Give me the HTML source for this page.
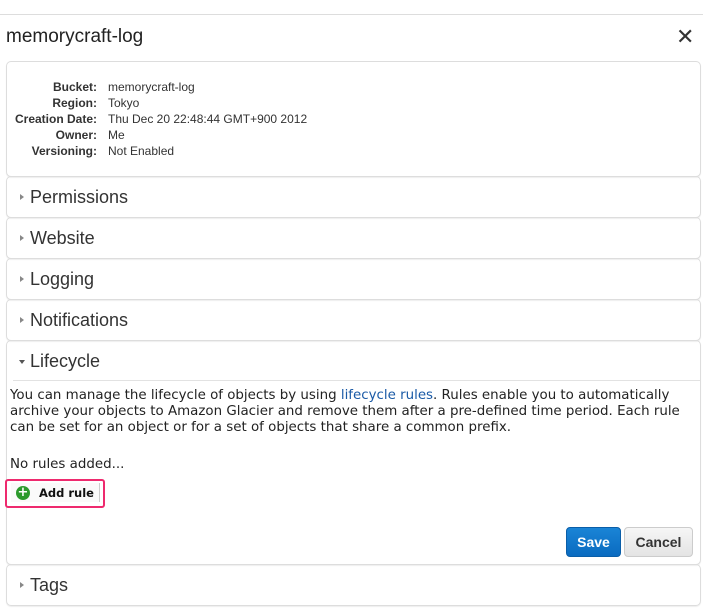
<!DOCTYPE html>
<html><head><style>
body{margin:0;width:703px;height:616px;background:#fff;font-family:"Liberation Sans",Arial,sans-serif;color:#333;position:relative;overflow:hidden}
.topline{position:absolute;top:14px;left:0;width:703px;height:1px;background:#ddd}
.title{position:absolute;top:26px;left:6px;font-size:19px;color:#222}
.close{position:absolute;top:24px;left:676px;font-size:22px;color:#333}
.box{position:absolute;left:6px;width:693px;border:1px solid #ddd;border-radius:5px;box-shadow:0 1px 1px #eee}
.info{top:61px;height:114px}
.row{position:absolute;font-size:12px;left:0;width:400px}
.row b{position:absolute;right:310px;width:120px;text-align:right;color:#333}
.row span{position:absolute;left:101px}
.sec{height:40px}
.sec .h{position:absolute;left:23px;top:10px;font-size:18px;color:#333}
.tri{position:absolute;left:13px;top:17px;width:0;height:0;border-left:4px solid #888;border-top:3px solid transparent;border-bottom:3px solid transparent}
.tridown{position:absolute;left:12px;top:19px;width:0;height:0;border-top:4px solid #555;border-left:3px solid transparent;border-right:3px solid transparent}
.desc{position:absolute;left:10px;top:388px;font-family:"DejaVu Sans",Verdana,sans-serif;font-size:13.4px;line-height:16px;color:#222;width:670px}
.desc a{color:#1a5aa6;text-decoration:none}
.norules{position:absolute;left:10px;top:457px;font-family:"DejaVu Sans",Verdana,sans-serif;font-size:13.4px;color:#222}
.addrule{position:absolute;left:5px;top:479px;width:96px;height:25px;border:2px solid #ee2a6e;border-radius:3px}
.addrule .in{position:absolute;left:4px;top:2px;width:88px;height:19px;border-right:1px solid #ccc;background:#fafafa;font-family:"DejaVu Sans",Verdana,sans-serif;font-weight:bold;font-size:11.5px;color:#111}
.plus{position:absolute;left:5px;top:3px;width:14px;height:14px;border-radius:50%;background:#2c9a2c;color:#fff;font-size:13px;line-height:13px;text-align:center}
.save{position:absolute;left:566px;top:527px;width:53px;height:28px;border-radius:4px;background:linear-gradient(#1a84d6,#0a6bc0);border:1px solid #0a5ea8;color:#fff;font-weight:bold;font-size:14px;text-align:center;line-height:28px}
.cancel{position:absolute;left:624px;top:527px;width:67px;height:28px;border-radius:4px;background:linear-gradient(#f6f6f6,#e4e4e4);border:1px solid #ccc;color:#333;font-weight:bold;font-size:14px;text-align:center;line-height:28px}
</style></head><body>
<div class="topline"></div>
<div class="title">memorycraft-log</div>
<div class="close">✕</div>
<div class="box info">
<div class="row" style="top:18px"><b>Bucket:</b><span>memorycraft-log</span></div>
<div class="row" style="top:34px"><b>Region:</b><span>Tokyo</span></div>
<div class="row" style="top:50px"><b>Creation Date:</b><span>Thu Dec 20 22:48:44 GMT+900 2012</span></div>
<div class="row" style="top:66px"><b>Owner:</b><span>Me</span></div>
<div class="row" style="top:82px"><b>Versioning:</b><span>Not Enabled</span></div>
</div>
<div class="box sec" style="top:176px"><div class="tri"></div><div class="h">Permissions</div></div>
<div class="box sec" style="top:217px"><div class="tri"></div><div class="h">Website</div></div>
<div class="box sec" style="top:258px"><div class="tri"></div><div class="h">Logging</div></div>
<div class="box sec" style="top:299px"><div class="tri"></div><div class="h">Notifications</div></div>
<div class="box" style="top:340px;height:223px"><div class="tridown"></div><div class="h" style="position:absolute;left:23px;top:10px;font-size:18px">Lifecycle</div>
<div style="position:absolute;left:6px;right:0;top:39px;height:1px;background:#e2e2e2"></div></div>
<div class="desc">You can manage the lifecycle of objects by using <a>lifecycle rules</a>. Rules enable you to automatically<br>archive your objects to Amazon Glacier and remove them after a pre-defined time period. Each rule<br>can be set for an object or for a set of objects that share a common prefix.</div>
<div class="norules">No rules added...</div>
<div class="addrule"><div class="in"><div class="plus">+</div><span style="position:absolute;left:28px;top:3px">Add rule</span></div></div>
<div class="save">Save</div>
<div class="cancel">Cancel</div>
<div class="box sec" style="top:564px"><div class="tri"></div><div class="h">Tags</div></div>
</body></html>
